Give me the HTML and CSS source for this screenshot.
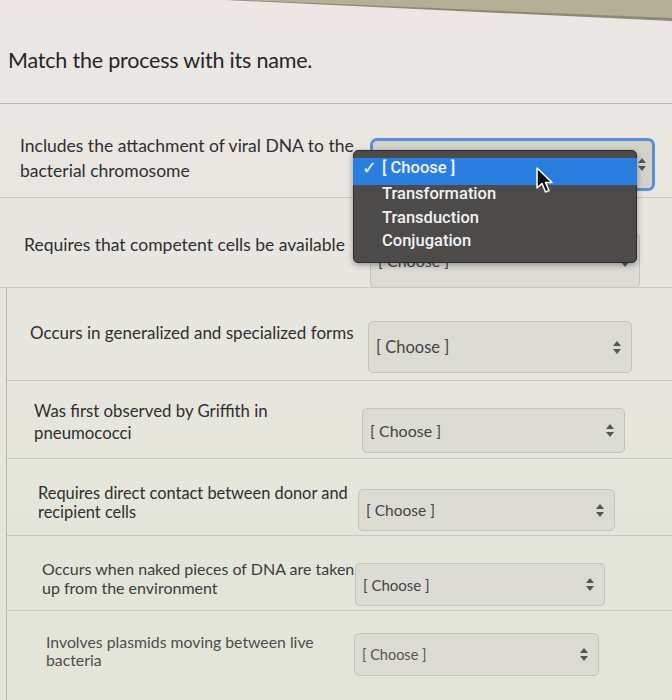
FILE: index.html
```html
<!DOCTYPE html>
<html>
<head>
<meta charset="utf-8">
<link rel="stylesheet" href="styles.css">
</head>
<body>
<div class="page">
  <div class="topstrip"><div class="topstrip-inner"></div></div>
  <h1 class="title">Match the process with its name.</h1>
  <div class="rows">
    <div class="row r1">
      <div class="label">Includes the attachment of viral DNA to the<br>bacterial chromosome</div>
      <div class="select focused"><span class="val"></span><span class="arr"><svg width="8" height="13" viewBox="0 0 8 13"><path d="M4 0 L8 5 L0 5 Z M0 8 L8 8 L4 13 Z" fill="#555"/></svg></span></div>
    </div>
    <div class="row r2">
      <div class="label">Requires that competent cells be available</div>
      <div class="select"><span class="val">[ Choose ]</span><span class="arr"><svg width="8" height="13" viewBox="0 0 8 13"><path d="M4 0 L8 5 L0 5 Z M0 8 L8 8 L4 13 Z" fill="#555"/></svg></span></div>
    </div>
    <div class="framed">
      <div class="row r3">
        <div class="label">Occurs in generalized and specialized forms</div>
        <div class="select"><span class="val">[ Choose ]</span><span class="arr"><svg width="8" height="13" viewBox="0 0 8 13"><path d="M4 0 L8 5 L0 5 Z M0 8 L8 8 L4 13 Z" fill="#555"/></svg></span></div>
      </div>
      <div class="row r4">
        <div class="label">Was first observed by Griffith in<br>pneumococci</div>
        <div class="select"><span class="val">[ Choose ]</span><span class="arr"><svg width="8" height="13" viewBox="0 0 8 13"><path d="M4 0 L8 5 L0 5 Z M0 8 L8 8 L4 13 Z" fill="#555"/></svg></span></div>
      </div>
      <div class="row r5">
        <div class="label">Requires direct contact between donor and<br>recipient cells</div>
        <div class="select"><span class="val">[ Choose ]</span><span class="arr"><svg width="8" height="13" viewBox="0 0 8 13"><path d="M4 0 L8 5 L0 5 Z M0 8 L8 8 L4 13 Z" fill="#555"/></svg></span></div>
      </div>
      <div class="row r6">
        <div class="label">Occurs when naked pieces of DNA are taken<br>up from the environment</div>
        <div class="select"><span class="val">[ Choose ]</span><span class="arr"><svg width="8" height="13" viewBox="0 0 8 13"><path d="M4 0 L8 5 L0 5 Z M0 8 L8 8 L4 13 Z" fill="#555"/></svg></span></div>
      </div>
      <div class="row r7">
        <div class="label">Involves plasmids moving between live<br>bacteria</div>
        <div class="select"><span class="val">[ Choose ]</span><span class="arr"><svg width="8" height="13" viewBox="0 0 8 13"><path d="M4 0 L8 5 L0 5 Z M0 8 L8 8 L4 13 Z" fill="#555"/></svg></span></div>
      </div>
    </div>
  </div>

  <div class="menu">
    <div class="opt selected"><span class="check">✓</span>[ Choose ]</div>
    <div class="opt">Transformation</div>
    <div class="opt">Transduction</div>
    <div class="opt">Conjugation</div>
  </div>
  <svg class="cursor" width="20" height="28" viewBox="0 0 20 28">
    <path d="M2 1 L2 21 L7 16.5 L10.5 25 L14 23.5 L10.5 15.5 L17 15.5 Z" fill="#111" stroke="#fff" stroke-width="1.5" stroke-linejoin="round"/>
  </svg>
</div>
</body>
</html>
```
FILE: styles.css
```css
html, body {
  margin: 0;
  padding: 0;
}
body {
  width: 672px;
  height: 700px;
  overflow: hidden;
  font-family: Lato, "Open Sans", sans-serif;
}
.page {
  position: relative;
  width: 672px;
  height: 700px;
  background: linear-gradient(180deg, #ece7e5 0%, #e9e6e1 30%, #e6e6dd 60%, #e3e5d8 100%);
  overflow: hidden;
}
.topstrip {
  height: 22px;
  background: #8d8977;
  clip-path: polygon(225px 0, 672px 0, 672px 21px);
}
.topstrip-inner {
  height: 22px;
  background: #b3b096;
  clip-path: polygon(240px 0, 672px 0, 672px 18px);
}
.title {
  margin: 0;
  padding: 26px 0 0 8px;
  height: 55px;
  font-size: 21.5px;
  font-weight: 400;
  color: #262626;
  line-height: 24px;
  letter-spacing: -0.2px;
  border-bottom: 1px solid #b9b7ae;
}
.rows {
  display: flex;
  flex-direction: column;
}
.framed {
  border-left: 1px solid #bcbab0;
  margin-left: 6px;
}
.row {
  display: flex;
  align-items: flex-start;
  border-bottom: 1px solid #c9c8bf;
  box-sizing: border-box;
}
.label {
  color: #2f2f2f;
  flex: none;
  white-space: nowrap;
}
.select {
  flex: none;
  box-sizing: border-box;
  display: flex;
  align-items: center;
  justify-content: space-between;
  background: #dcdbd4;
  border: 1px solid #c4c3ba;
  border-radius: 5px;
  padding: 0 10px 0 7px;
  color: #444;
  font-family: Lato, sans-serif;
}
.select.focused {
  border: 3px solid #5d8fd3;
  border-radius: 7px;
  background: #d3d3cc;
  padding-right: 6px;
}
.arr {
  display: flex;
}

.r1 { height: 94px; padding-left: 20px; }
.r1 .label { width: 350px; margin-top: 29px; font-size: 17.5px; line-height: 25px; }
.r1 .select { width: 285px; height: 53px; margin-top: 34px; }

.r2 { height: 90px; padding-left: 24px; }
.r2 .label { width: 346px; margin-top: 35px; font-size: 17.5px; line-height: 24px; }
.r2 .select { width: 270px; height: 55px; margin-top: 35px; font-size: 16px; }

.r3 { height: 93px; padding-left: 23px; }
.r3 .label { width: 338px; margin-top: 33px; font-size: 17px; line-height: 24px; }
.r3 .select { width: 264px; height: 52px; margin-top: 33px; font-size: 16.5px; }

.r4 { height: 78px; padding-left: 27px; }
.r4 .label { width: 328px; margin-top: 19px; font-size: 16.8px; line-height: 22px; }
.r4 .select { width: 263px; height: 45px; margin-top: 27px; font-size: 16px; }

.r5 { height: 77px; padding-left: 31px; }
.r5 .label { width: 320px; margin-top: 24px; font-size: 16.4px; line-height: 19px; }
.r5 .select { width: 257px; height: 42px; margin-top: 30px; font-size: 15.5px; }

.r6 { height: 75px; padding-left: 35px; }
.r6 .label { width: 313px; margin-top: 23px; font-size: 16px; line-height: 19px; color: #3d3d3d; }
.r6 .select { width: 250px; height: 43px; margin-top: 27px; font-size: 15px; }

.r7 { height: 90px; padding-left: 39px; border-bottom: none; }
.r7 .label { width: 308px; margin-top: 22px; font-size: 15.8px; line-height: 18px; color: #4d4d4d; }
.r7 .select { width: 245px; height: 43px; margin-top: 22px; font-size: 14.5px; color: #555; }

.menu {
  position: absolute;
  left: 353px;
  top: 150px;
  width: 284px;
  height: 113px;
  box-sizing: border-box;
  background: #4c4b4a;
  border: 1px solid #2e2d2c;
  border-radius: 5px;
  padding-top: 7px;
  font-family: Roboto, "Liberation Sans", sans-serif;
  font-weight: 500;
  font-size: 16.5px;
  color: #f2f2f2;
  box-shadow: 0 2px 6px rgba(0,0,0,0.35);
}
.opt {
  height: 23.5px;
  line-height: 23.5px;
  padding-left: 28px;
  position: relative;
}
.opt.selected {
  height: 27px;
  line-height: 20px;
  box-sizing: border-box;
  padding-bottom: 7px;
  background: #2a7ee0;
  margin: 0 -1px 0 -1px;
  padding-left: 29px;
}
.opt.selected + .opt {
  margin-top: -3px;
}
.check {
  position: absolute;
  left: 9px;
  top: 0;
  font-size: 18px;
}
.cursor {
  position: absolute;
  left: 535px;
  top: 167px;
}
```
